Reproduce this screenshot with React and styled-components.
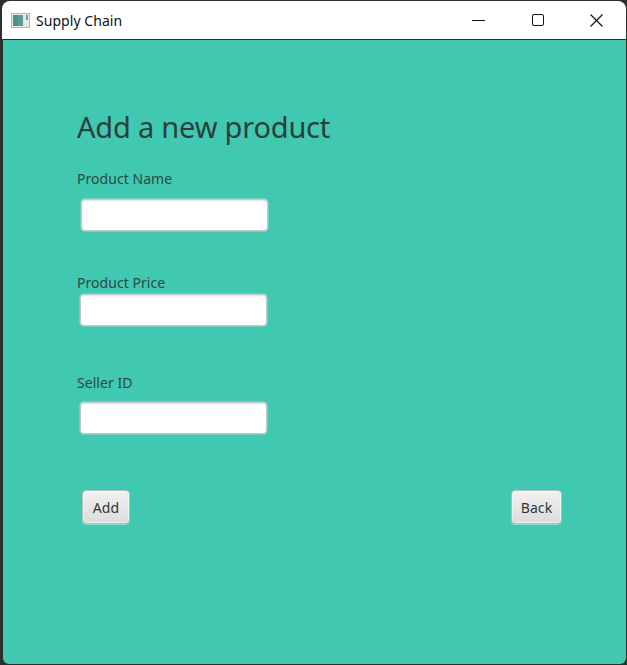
import React from "react";
import styled, { createGlobalStyle } from "styled-components";

const Global = createGlobalStyle`
  html, body { margin: 0; padding: 0; background: #2b2b2b; }
  #root { width: 627px; height: 665px; overflow: hidden; }
  * { box-sizing: border-box; }
`;

const Window = styled.div`
  width: 627px;
  height: 665px;
  display: flex;
  flex-direction: column;
  padding-top: 1px;
  background: #2e2e2e;
  font-family: "Noto Sans", "Open Sans", sans-serif;
  color: #2c3b38;
`;

const TitleBar = styled.div`
  height: 38px;
  margin: 0 1px 0 2px;
  flex: none;
  display: flex;
  align-items: center;
  background: #fff;
  border-radius: 8px 8px 0 0;
  padding-left: 9px;
`;

const AppIcon = styled.svg`
  width: 19px;
  height: 15px;
  flex: none;
  margin-right: 6px;
`;

const WindowTitle = styled.span`
  font-size: 14px;
  letter-spacing: 0.05px;
  color: #111;
  flex: 1;
`;

const WinButton = styled.div`
  width: 59px;
  height: 38px;
  display: flex;
  align-items: center;
  justify-content: center;
`;

const Content = styled.main`
  flex: 1;
  margin: 1px 1px 1px 3px;
  background: #40c8b0;
  border-radius: 0 0 6px 6px;
  padding: 67px 64px 0 74px;
  display: flex;
  flex-direction: column;
`;

const Heading = styled.h1`
  margin: 0 0 22px;
  font-size: 29px;
  line-height: 40px;
  font-weight: 400;
  letter-spacing: -0.2px;
  color: #2a3f3c;
`;

const Field = styled.div`
  display: flex;
  flex-direction: column;
  margin-bottom: ${(p) => p.$after}px;
`;

const Label = styled.label`
  font-size: 14px;
  line-height: 20px;
  letter-spacing: 0.05px;
  color: #2c4a44;
  margin-bottom: ${(p) => p.$gap}px;
`;

const Input = styled.input`
  width: 187px;
  height: 32px;
  margin-left: ${(p) => p.$indent}px;
  border: 1px solid #c2c6c6;
  border-radius: 4px;
  background: #fff;
  box-shadow: inset 0 2px 2px -1px #e2e2e2, 0 0 0 0.5px rgba(220, 225, 225, 0.7);
  outline: none;
`;

const Actions = styled.div`
  display: flex;
  justify-content: space-between;
  padding-left: 5px;
`;

const Button = styled.button`
  width: ${(p) => p.$width}px;
  height: 34px;
  padding: 0;
  border: 1px solid #b4bdbb;
  border-radius: 4px;
  background: linear-gradient(#f1f1f1, #dcdcdc);
  box-shadow: 0 0 0 1px rgba(255, 255, 255, 0.45) inset, 0 1px 0 rgba(225, 235, 233, 0.5);
  font-family: inherit;
  font-size: 14px;
  letter-spacing: 0.05px;
  color: #2f3836;
`;

export default function App() {
  return (
    <>
      <Global />
      <Window>
        <TitleBar>
          <AppIcon viewBox="0 0 19 15">
            <rect x="0.5" y="0.5" width="18" height="14" fill="#e4e8e8" stroke="#b4b8b8" />
            <rect x="2" y="2" width="10" height="11" fill="#5c9a92" />
            <rect x="2" y="2" width="5" height="11" fill="#4b8a80" opacity="0.6" />
            <rect x="15" y="2" width="2" height="5" fill="#7f9a98" />
          </AppIcon>
          <WindowTitle>Supply Chain</WindowTitle>
          <WinButton>
            <svg width="13" height="12" viewBox="0 0 13 12">
              <path d="M0 6.5H13" stroke="#111" fill="none" />
            </svg>
          </WinButton>
          <WinButton>
            <svg width="12" height="12" viewBox="0 0 12 12">
              <rect x="0.5" y="0.5" width="11" height="11" rx="1.5" stroke="#111" fill="none" />
            </svg>
          </WinButton>
          <WinButton>
            <svg width="13" height="13" viewBox="0 0 13 13">
              <path d="M0.5 0.5L12.5 12.5M12.5 0.5L0.5 12.5" stroke="#111" strokeWidth="1.2" fill="none" />
            </svg>
          </WinButton>
        </TitleBar>
        <Content>
          <Heading>Add a new product</Heading>
          <Field $after={42}>
            <Label $gap={10}>Product Name</Label>
            <Input $indent={4} />
          </Field>
          <Field $after={47}>
            <Label $gap={1}>Product Price</Label>
            <Input $indent={3} />
          </Field>
          <Field $after={56}>
            <Label $gap={9}>Seller ID</Label>
            <Input $indent={3} />
          </Field>
          <Actions>
            <Button $width={48}>Add</Button>
            <Button $width={51}>Back</Button>
          </Actions>
        </Content>
      </Window>
    </>
  );
}
